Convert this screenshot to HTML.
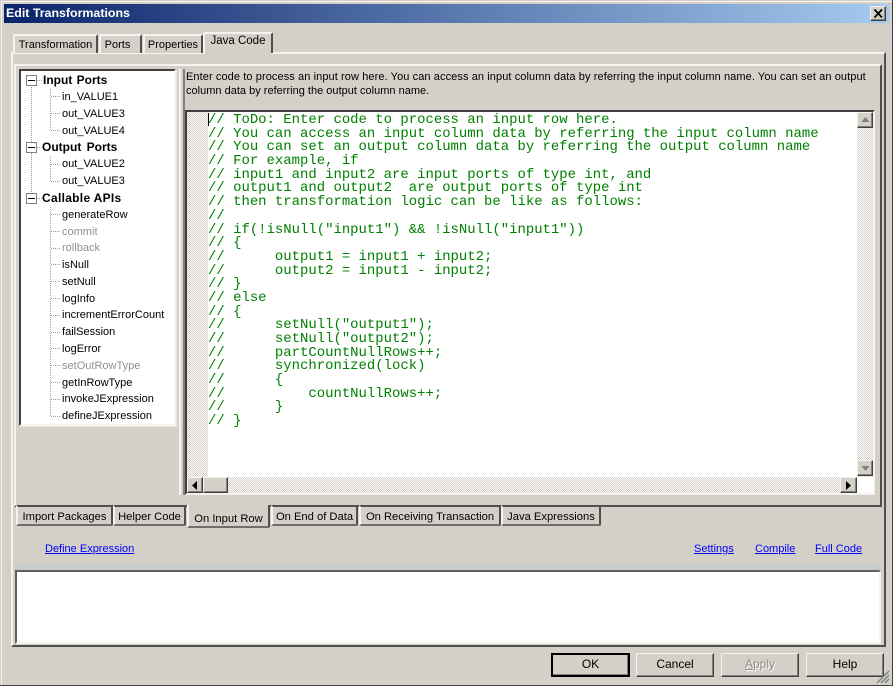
<!DOCTYPE html>
<html><head><meta charset="utf-8"><style>
html,body{margin:0;padding:0;width:893px;height:686px;overflow:hidden;background:#d4d0c8}
*{box-sizing:border-box}
div,a,span.x{position:absolute;white-space:nowrap}
body{font:11px/14px "Liberation Sans",sans-serif;color:#000}
.tab{background:#d4d0c8;border-top:2px solid #f4f3ef;border-left:2px solid #f4f3ef;border-right:2px solid #505050;border-radius:2px 2px 0 0;text-align:center;font-size:11px;line-height:19px;height:22px}
.btab{background:#d4d0c8;border-left:2px solid #f4f3ef;border-right:2px solid #505050;border-bottom:2px solid #6e6e6e;border-top:2px solid #505050;border-radius:0 0 2px 2px;text-align:center;font-size:11.200px;line-height:21px;height:21px}
.t{left:0;font-size:11px;line-height:14px;letter-spacing:.01px}
.t.b{font-weight:bold;font-size:12px;letter-spacing:0}
.g{color:#909090}
.h{background:repeating-linear-gradient(90deg,#a0a0a0 0 1px,transparent 1px 2px);height:1px}
.v{background:repeating-linear-gradient(0deg,#a0a0a0 0 1px,transparent 1px 2px);width:1px}
.pm{width:11px;height:11px;border:1px solid #808080;background:#fff}
.pm:after{content:"";position:absolute;left:1px;top:4px;width:7px;height:1px;background:#000}
.btn{top:653px;height:24px;background:#d4d0c8;border:1px solid;border-color:#f4f3ef #404040 #404040 #f4f3ef;box-shadow:inset -1px -1px 0 #808080;text-align:center;line-height:21px;font-size:12px}
a{color:#00f;text-decoration:underline;font-size:11px;top:542px}
pre{position:absolute;margin:0;left:208px;top:114px;font:13.950px/13.680px "Liberation Mono",monospace;color:#008000}
.sb{background:#d4d0c8;border:1px solid;border-color:#f4f3ef #404040 #404040 #f4f3ef;box-shadow:inset -1px -1px 0 #808080}
.dith{background-color:#fff;background-image:linear-gradient(45deg,#d4d0c8 25%,transparent 25%,transparent 75%,#d4d0c8 75%),linear-gradient(45deg,#d4d0c8 25%,transparent 25%,transparent 75%,#d4d0c8 75%);background-size:2px 2px;background-position:0 0,1px 1px}
</style></head><body>
<div style="left:0;top:0;width:893px;height:686px;border-right:1px solid #404040;border-bottom:1px solid #404040;box-shadow:inset 1px 1px 0 #d4d0c8,inset 2px 2px 0 #f4f3ef"></div>
<div style="left:4px;top:4px;width:885px;height:19px;background:linear-gradient(90deg,#0a246a,#a6caf0)"></div>
<div style="left:6px;top:6px;color:#fff;font-weight:bold;font-size:12.400px;line-height:15px">Edit Transformations</div>
<div class="sb" style="left:870px;top:6px;width:16px;height:15px"><svg style="position:absolute;left:0;top:0" width="14" height="13"><path d="M3.500 2.500L11 10.500M11 2.500L3.500 10.500" stroke="#000" stroke-width="1.800" fill="none"/></svg></div>

<div style="left:11px;top:52px;width:875px;height:595px;background:#d4d0c8;border:2px solid;border-color:#f4f3ef #505050 #505050 #f4f3ef"></div>
<div style="left:14px;top:64px;width:868px;height:443px;border:2px solid;border-color:#f4f3ef #505050 #505050 #f4f3ef"></div>
<div class="tab" style="left:13px;top:34px;width:85px;height:19px">Transformation</div>
<div class="tab" style="left:99px;top:34px;width:43px;height:19px;padding-right:6px">Ports</div>
<div class="tab" style="left:143px;top:34px;width:60px;height:19px">Properties</div>
<div class="tab" style="left:203px;top:32px;width:70px;height:21px;line-height:15px;font-size:11.500px;z-index:2">Java Code</div>
<div style="left:205px;top:52px;width:66px;height:2px;background:#d4d0c8;z-index:2"></div>

<div style="left:19px;top:69px;width:157px;height:357px;background:#fff;border:2px solid;border-color:#404040 #f4f3ef #f4f3ef #404040;box-shadow:1px 1px 0 #e8e6e0"></div>
<div class="v" style="left:31px;top:86px;height:108px"></div>
<div class="h" style="left:37px;top:80px;width:5px"></div>
<div class="h" style="left:37px;top:147px;width:5px"></div>
<div class="h" style="left:37px;top:198px;width:5px"></div>
<div class="pm" style="left:26px;top:75px"></div>
<div class="pm" style="left:26px;top:142px"></div>
<div class="pm" style="left:26px;top:193px"></div>
<div class="v" style="left:50px;top:88px;height:42px"></div>
<div class="v" style="left:50px;top:155px;height:26px"></div>
<div class="v" style="left:50px;top:206px;height:210px"></div>
<div class="t b" style="left:43px;top:73px;word-spacing:1px">Input Ports</div>
<div class="t" style="left:62px;top:90px">in_VALUE1</div>
<div class="t" style="left:62px;top:107px">out_VALUE3</div>
<div class="t" style="left:62px;top:124px">out_VALUE4</div>
<div class="t b" style="left:42px;top:140px;word-spacing:2px">Output Ports</div>
<div class="t" style="left:62px;top:157px">out_VALUE2</div>
<div class="t" style="left:62px;top:174px">out_VALUE3</div>
<div class="t b" style="left:42px;top:191px;letter-spacing:.3px">Callable APIs</div>
<div class="t" style="left:62px;top:208px">generateRow</div>
<div class="t g" style="left:62px;top:225px">commit</div>
<div class="t g" style="left:62px;top:241px">rollback</div>
<div class="t" style="left:62px;top:258px">isNull</div>
<div class="t" style="left:62px;top:275px">setNull</div>
<div class="t" style="left:62px;top:292px">logInfo</div>
<div class="t" style="left:62px;top:308px">incrementErrorCount</div>
<div class="t" style="left:62px;top:325px">failSession</div>
<div class="t" style="left:62px;top:342px">logError</div>
<div class="t g" style="left:62px;top:359px">setOutRowType</div>
<div class="t" style="left:62px;top:376px">getInRowType</div>
<div class="t" style="left:62px;top:392px">invokeJExpression</div>
<div class="t" style="left:62px;top:409px">defineJExpression</div>
<div class="h" style="left:51px;top:96px;width:10px"></div><div class="h" style="left:51px;top:113px;width:10px"></div><div class="h" style="left:51px;top:130px;width:10px"></div>
<div class="h" style="left:51px;top:164px;width:10px"></div><div class="h" style="left:51px;top:181px;width:10px"></div>
<div class="h" style="left:51px;top:214px;width:10px"></div><div class="h" style="left:51px;top:231px;width:10px"></div><div class="h" style="left:51px;top:248px;width:10px"></div><div class="h" style="left:51px;top:264px;width:10px"></div><div class="h" style="left:51px;top:281px;width:10px"></div><div class="h" style="left:51px;top:298px;width:10px"></div><div class="h" style="left:51px;top:315px;width:10px"></div><div class="h" style="left:51px;top:332px;width:10px"></div><div class="h" style="left:51px;top:348px;width:10px"></div><div class="h" style="left:51px;top:365px;width:10px"></div><div class="h" style="left:51px;top:382px;width:10px"></div><div class="h" style="left:51px;top:399px;width:10px"></div><div class="h" style="left:51px;top:416px;width:10px"></div>

<div style="left:179px;top:69px;width:6px;height:426px;background:#d4d0c8;border-left:2px solid #f4f3ef;border-right:2px solid #808080"></div>
<div style="left:186px;top:70px;font-size:11px;line-height:14px;letter-spacing:.09px;width:690px">Enter code to process an input row here. You can access an input column data by referring the input column name. You can set an output<br><span style="letter-spacing:.01px">column data by referring the output column name.</span></div>

<div style="left:185px;top:110px;width:690px;height:385px;background:#fff;border:2px solid;border-color:#404040 #f4f3ef #f4f3ef #404040"></div>
<div class="dith" style="left:187px;top:112px;width:21px;height:365px"></div>
<div style="left:208px;top:113px;height:13px;background:#000;width:1px"></div>
<pre>// ToDo: Enter code to process an input row here.
// You can access an input column data by referring the input column name
// You can set an output column data by referring the output column name
// For example, if
// input1 and input2 are input ports of type int, and
// output1 and output2  are output ports of type int
// then transformation logic can be like as follows:
//
// if(!isNull("input1") &amp;&amp; !isNull("input1"))
// {
//      output1 = input1 + input2;
//      output2 = input1 - input2;
// }
// else
// {
//      setNull("output1");
//      setNull("output2");
//      partCountNullRows++;
//      synchronized(lock)
//      {
//          countNullRows++;
//      }
// }</pre>
<div class="dith" style="left:857px;top:112px;width:16px;height:365px"></div>
<div class="sb" style="left:857px;top:112px;width:16px;height:16px"><svg style="position:absolute;left:3px;top:4px" width="9" height="6"><path d="M4.500 0L8.500 5H0.500z" fill="#808080"/></svg></div>
<div class="sb" style="left:857px;top:460px;width:16px;height:16px"><svg style="position:absolute;left:3px;top:5px" width="9" height="6"><path d="M0.500 0H8.500L4.500 5z" fill="#808080"/></svg></div>
<div class="dith" style="left:187px;top:477px;width:670px;height:16px"></div>
<div class="sb" style="left:187px;top:477px;width:16px;height:16px"><svg style="position:absolute;left:4px;top:3px" width="6" height="9"><path d="M5 0V9L0 4.500z" fill="#000"/></svg></div>
<div class="sb" style="left:203px;top:477px;width:25px;height:16px"></div>
<div class="sb" style="left:840px;top:477px;width:17px;height:16px"><svg style="position:absolute;left:5px;top:3px" width="6" height="9"><path d="M0 0V9L5 4.500z" fill="#000"/></svg></div>

<div class="btab" style="left:16px;top:505px;width:97px">Import Packages</div>
<div class="btab" style="left:113px;top:505px;width:73px">Helper Code</div>
<div class="btab" style="left:187px;top:505px;width:83px;height:23px;border-top:0;line-height:28px;z-index:2">On Input Row</div>
<div class="btab" style="left:271px;top:505px;width:87px">On End of Data</div>
<div class="btab" style="left:359px;top:505px;width:142px">On Receiving Transaction</div>
<div class="btab" style="left:501px;top:505px;width:100px">Java Expressions</div>

<a style="left:45px">Define Expression</a>
<a style="left:694px">Settings</a>
<a style="left:755px">Compile</a>
<a style="left:815px">Full Code</a>

<div style="left:15px;top:565px;width:866px;height:6px;background:#c6cccc;border-bottom:1px solid #808080"></div>
<div style="left:15px;top:570px;width:866px;height:74px;background:#fff;border:2px solid;border-color:#606060 #f4f3ef #f4f3ef #606060"></div>

<div class="btn" style="left:551px;width:79px;border:2px solid #000;line-height:19px">OK</div>
<div class="btn" style="left:636px;width:78px">Cancel</div>
<div class="btn" style="left:721px;width:78px;color:#8c8c8c;text-shadow:1px 1px 0 #fff"><u>A</u>pply</div>
<div class="btn" style="left:806px;width:78px">Help</div>
<svg style="position:absolute;left:876px;top:670px" width="14" height="14"><path d="M13 1L1 13M13 5L5 13M13 9L9 13" stroke="#808080" stroke-width="1.500"/></svg>
</body></html>
